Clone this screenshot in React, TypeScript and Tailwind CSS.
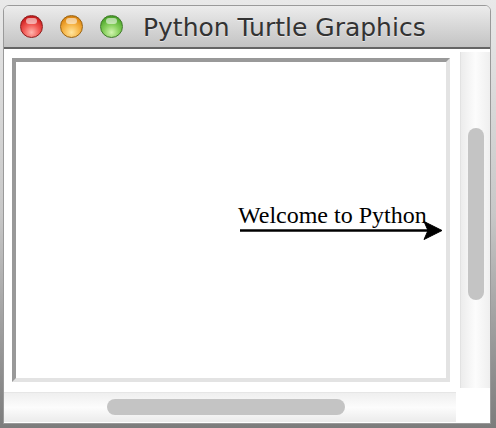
import React from 'react'

function Light({ color }: { color: 'red' | 'orange' | 'green' }) {
  const fill =
    color === 'red'
      ? 'bg-[radial-gradient(circle_at_50%_78%,#ffb6ae_0%,#f25a55_40%,#cf2020_75%,#a31414_100%)] border-[#8e1d1d]'
      : color === 'orange'
        ? 'bg-[radial-gradient(circle_at_50%_78%,#ffe6a0_0%,#f7b74a_40%,#e08a14_75%,#b56a0e_100%)] border-[#9a6412]'
        : 'bg-[radial-gradient(circle_at_50%_78%,#d2f5b0_0%,#86cf5c_40%,#4fa82c_75%,#3a8020_100%)] border-[#3f7a2a]'
  return (
    <div className={`relative w-[23px] h-[23px] rounded-full border ${fill}`}>
      <div className="absolute left-[5px] top-[2px] w-[11px] h-[6px] rounded-full bg-white/55" />
    </div>
  )
}

export default function App() {
  return (
    <div className="w-[496px] h-[428px] bg-gradient-to-b from-[#e9e9e9] via-[#c8c8c8] to-[#7c7c7c] pt-[5px] pl-[3px] pr-[5px] pb-[4px] overflow-hidden">
      <div className="w-[488px] h-[419px] flex flex-col rounded-t-[6px] border border-[#9a9a9a] bg-white overflow-hidden">
        {/* Title bar */}
        <div className="h-[43px] flex items-center bg-gradient-to-b from-[#ececec] to-[#c3c3c3] border-b-2 border-[#656565] pl-[16px] shrink-0">
          <div className="flex items-center gap-[17px]">
            <Light color="red" />
            <Light color="orange" />
            <Light color="green" />
          </div>
          <span className="ml-[20px] text-[25px] leading-none text-[#333333] [text-shadow:0_1px_0_rgba(255,255,255,0.5)] font-['DejaVu_Sans',sans-serif] mt-[1px]">
            Python Turtle Graphics
          </span>
        </div>

        {/* Content */}
        <div className="flex h-[343px] shrink-0">
          <div className="w-[456px] pl-[8px] pt-[9px]">
            <div className="relative w-[438px] h-[324px] border-4 border-t-[#999999] border-l-[#999999] border-r-[#e3e3e3] border-b-[#e3e3e3] bg-white">
              <span className="absolute left-[222px] top-[141px] whitespace-nowrap text-[24px] leading-none text-black font-['Liberation_Serif',serif]">
                Welcome to Python
              </span>
              <svg className="absolute left-0 top-0" width="430" height="316" viewBox="0 0 430 316">
                <line x1="224" y1="168.5" x2="416" y2="168.5" stroke="#000" strokeWidth="2.5" />
                <polygon points="426,168.5 408,159.5 412,168.5 408,177.5" fill="#000" stroke="#000" strokeWidth="1" />
              </svg>
            </div>
          </div>
          <div className="w-[30px] pt-[3px]">
            <div className="relative h-[336px] bg-gradient-to-r from-[#ececec] via-[#fcfcfc] to-[#efefef] border-l border-[#e2e2e2]">
              <div className="absolute left-[7px] top-[76px] w-[16px] h-[172px] rounded-full bg-[#c4c4c4]" />
            </div>
          </div>
        </div>
        <div className="flex flex-1">
          <div className="relative w-[452px] h-[30px] bg-gradient-to-b from-[#efefef] via-[#fcfcfc] to-[#ebebeb] border-t border-[#e6e6e6]">
            <div className="absolute left-[103px] top-[6px] w-[238px] h-[16px] rounded-full bg-[#c4c4c4]" />
          </div>
        </div>
      </div>
    </div>
  )
}
